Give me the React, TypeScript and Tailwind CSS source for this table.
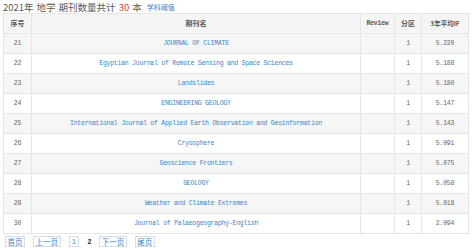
const rows: [number, string, string][] = [
  [21, 'JOURNAL OF CLIMATE', '5.220'],
  [22, 'Egyptian Journal of Remote Sensing and Space Sciences', '5.188'],
  [23, 'Landslides', '5.180'],
  [24, 'ENGINEERING GEOLOGY', '5.147'],
  [25, 'International Journal of Applied Earth Observation and Geoinformation', '5.143'],
  [26, 'Cryosphere', '5.091'],
  [27, 'Geoscience Frontiers', '5.075'],
  [28, 'GEOLOGY', '5.058'],
  [29, 'Weather and Climate Extremes', '5.018'],
  [30, 'Journal of Palaeogeography-English', '2.094'],
];

const mono = "font-['Liberation_Mono','Noto_Sans_CJK_SC',monospace]";
const cjk = "font-['Noto_Sans_CJK_SC','Noto_Sans',sans-serif]";

function PageLink({ label }: { label: string }) {
  return (
    <span className="flex h-[11px] items-center border border-[#d4dde6] px-[1.5px] text-[7.5px] leading-none text-[#3a86c8]">
      {label}
    </span>
  );
}

export default function App() {
  return (
    <div className={`h-[248px] w-[474px] overflow-hidden bg-white ${cjk}`}>
      <div className="flex h-[13px] items-end gap-[3px] pl-[3px] text-[9.5px] leading-[12px] text-[#5a5a5a]">
        <span>2021年</span>
        <span>地学</span>
        <span>期刊数量共计</span>
        <span className="text-[#e8403a]">30</span>
        <span>本</span>
        <span className="ml-[2px] text-[7px] text-[#3a86c8]">学科阈值</span>
      </div>
      <table
        className={`ml-[3px] w-[465px] table-fixed border-collapse text-[6.5px] tracking-[-0.25px] text-[#666] ${mono}`}
      >
        <colgroup>
          <col className="w-[28px]" />
          <col className="w-[329px]" />
          <col className="w-[34px]" />
          <col className="w-[27px]" />
          <col className="w-[47px]" />
        </colgroup>
        <thead>
          <tr className="h-[20px] bg-[#f5f5f5] text-[#555]">
            <th className={`border border-[#e6e6e6] text-[7px] font-bold tracking-normal ${cjk}`}>序号</th>
            <th className={`border border-[#e6e6e6] text-[7px] font-bold tracking-normal ${cjk}`}>期刊名</th>
            <th className="border border-[#e6e6e6] font-bold">Review</th>
            <th className={`border border-[#e6e6e6] text-[7px] font-bold tracking-normal ${cjk}`}>分区</th>
            <th className={`border border-[#e6e6e6] text-[6.5px] font-bold tracking-normal ${cjk}`}>3年平均IF</th>
          </tr>
        </thead>
        <tbody>
          {rows.map(([no, name, ifv], i) => (
            <tr key={no} className={`h-[20px] ${i % 2 === 0 ? 'bg-[#f6f6f6]' : 'bg-white'}`}>
              <td className="border border-[#e6e6e6] text-center">{no}</td>
              <td className="border border-[#e6e6e6] text-center text-[#3a86c8]">{name}</td>
              <td className="border border-[#e6e6e6]" />
              <td className="border border-[#e6e6e6] text-center">1</td>
              <td className="border border-[#e6e6e6] text-center">{ifv}</td>
            </tr>
          ))}
        </tbody>
      </table>
      <div className="mt-[2px] flex items-center gap-[8px] pl-[5px]">
        <PageLink label="首页" />
        <PageLink label="上一页" />
        <span className="flex h-[11px] items-center border border-[#d4dde6] px-[2.5px] font-['Liberation_Sans',sans-serif] text-[7px] leading-none text-[#3a86c8]">
          1
        </span>
        <span className="font-['Liberation_Sans',sans-serif] text-[7px] font-bold leading-none text-[#222]">2</span>
        <PageLink label="下一页" />
        <PageLink label="尾页" />
      </div>
    </div>
  );
}
